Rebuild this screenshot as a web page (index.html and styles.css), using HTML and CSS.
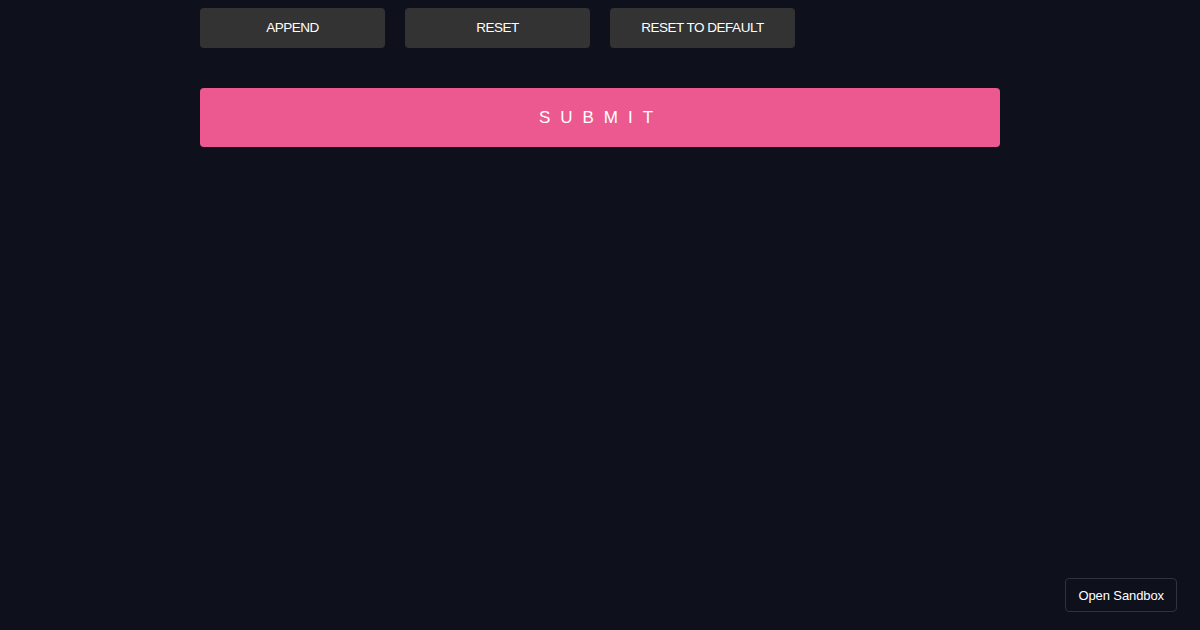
FILE: index.html
```html
<!DOCTYPE html>
<html>
<head>
<meta charset="utf-8">
<link rel="stylesheet" href="styles.css">
</head>
<body>
<div class="page">
  <div class="actions">
    <button class="btn">APPEND</button>
    <button class="btn">RESET</button>
    <button class="btn">RESET TO DEFAULT</button>
  </div>
  <button class="submit">SUBMIT</button>
</div>
<a class="sandbox">Open Sandbox</a>
</body>
</html>
```
FILE: styles.css
```css
html, body {
  margin: 0;
  padding: 0;
  background: #0e101c;
  height: 100%;
  font-family: "Liberation Sans", Arial, sans-serif;
}
.page {
  width: 800px;
  margin: 0 auto;
  padding-top: 8px;
  display: flex;
  flex-direction: column;
}
.actions {
  display: flex;
  gap: 20px;
}
.btn {
  width: 185px;
  height: 40px;
  background: #333333;
  color: #ffffff;
  border: none;
  border-radius: 4px;
  font-family: "Liberation Sans", Arial, sans-serif;
  font-size: 13.5px;
  letter-spacing: -0.5px;
  padding: 0 0 2px;
}
.submit {
  margin-top: 40px;
  height: 59px;
  background: #ec5990;
  color: #ffffff;
  border: none;
  border-radius: 4px;
  font-family: "Liberation Sans", Arial, sans-serif;
  font-size: 17px;
  letter-spacing: 10px;
  text-indent: 2px;
  padding: 0;
}
.sandbox {
  position: fixed;
  right: 23px;
  bottom: 18px;
  height: 32px;
  padding: 0 12px;
  display: flex;
  align-items: center;
  border: 1px solid #2f3340;
  border-radius: 4px;
  color: #ffffff;
  font-size: 13px;
  letter-spacing: -0.1px;
  background: #0e101c;
}
```
